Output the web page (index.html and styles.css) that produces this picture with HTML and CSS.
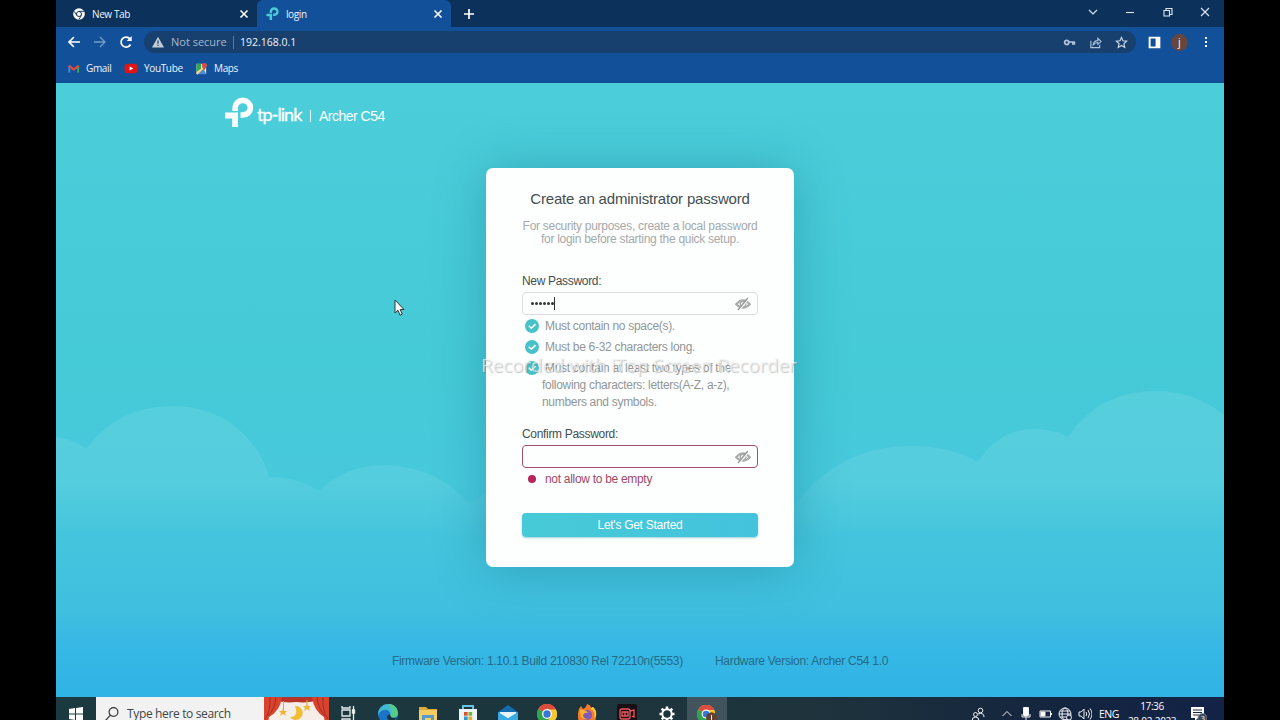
FILE: index.html
```html
<!DOCTYPE html>
<html lang="en">
<head>
<meta charset="utf-8">
<title>login</title>
<link rel="stylesheet" href="styles.css">
</head>
<body>
<svg class="defs" width="0" height="0" aria-hidden="true">
  <symbol id="tp" viewBox="0 0 30 30"><path d="M11.200 14V10.700a7.600 7.300 0 1 1 7.600 7.300H16.500" fill="none" stroke="currentColor" stroke-width="5.600"/><path d="M1 15.500h13V30H8.200v-8.500H1z" fill="currentColor"/></symbol>
  <symbol id="x" viewBox="0 0 10 10"><path d="M1.500 1.500l7 7M8.500 1.500l-7 7" fill="none" stroke="currentColor" stroke-width="1.600"/></symbol>
  <symbol id="chrome" viewBox="0 0 20 20"><circle cx="10" cy="10" r="10" fill="#f9c62f"/><path d="M10 10L1.300 5A10 10 0 0 1 18.700 5z" fill="#dd4b3e"/><path d="M10 10L1.300 5A10 10 0 0 0 9 20l5-8z" fill="#2da44f"/><path d="M10 5.500h8.900A10 10 0 0 1 9 20l5-8z" fill="#f9c62f"/><circle cx="10" cy="10" r="4.900" fill="#fff"/><circle cx="10" cy="10" r="3.700" fill="#3975d6"/></symbol>
  <symbol id="eye" viewBox="0 0 16 14"><path d="M1.200 7.200q6.800-8 13.600 0q-6.800 7-13.600 0z" fill="none" stroke="#aaa" stroke-width="2"/><circle cx="8" cy="7" r="2.800" fill="none" stroke="#aaa" stroke-width="1.400"/><path d="M4 13.500L13.800 1.500" stroke="#fdfefe" stroke-width="1.200"/><path d="M3 13L12.800 1" stroke="#999" stroke-width="1.400"/></symbol>
  <symbol id="check" viewBox="0 0 14 14"><circle cx="7" cy="7" r="7" fill="#48c2c9"/><path d="M3.800 6.800l2.500 2.500 4.200-4.200" fill="none" stroke="#fff" stroke-width="1.500"/></symbol>
</svg>
<div class="screen">
  <header class="tabs">
    <div class="tab">
      <svg class="favicon" viewBox="0 0 12 12"><circle cx="6" cy="6" r="5.800" fill="#fff"/><circle cx="6" cy="6" r="2.500" fill="#fff" stroke="#103158" stroke-width="1"/><path d="M6 3.300h5M3.600 7.300L1.300 3.400M8.400 7.300L6 11.400" stroke="#103158" stroke-width=".9"/></svg>
      <span class="tab-title">New Tab</span><svg class="close"><use href="#x"/></svg>
    </div>
    <div class="tab tab-active">
      <svg class="favicon"><use href="#tp"/></svg>
      <span class="tab-title">login</span><svg class="close"><use href="#x"/></svg>
    </div>
    <svg class="plus" viewBox="0 0 12 12"><path d="M6 1v10M1 6h10" stroke="#fff" stroke-width="1.700"/></svg>
    <div class="window-controls">
      <svg viewBox="0 0 12 12"><path d="M2 4l4 4 4-4" /></svg>
      <svg viewBox="0 0 12 12"><path d="M2 6.500h8"/></svg>
      <svg viewBox="0 0 12 12"><path d="M2 4.500h5.500V10H2zM4 4.500v-2h6v6H7.500"/></svg>
      <svg viewBox="0 0 12 12"><path d="M2 2l8 8M10 2l-8 8"/></svg>
    </div>
  </header>
  <div class="toolbar">
    <svg class="nav" viewBox="0 0 14 14"><path d="M13 7H2M7 2L2 7l5 5"/></svg>
    <svg class="nav nav-dim" viewBox="0 0 14 14"><path d="M1 7h11M7 2l5 5-5 5"/></svg>
    <svg class="nav" viewBox="0 0 14 14"><path d="M11.500 9.500A5 5 0 1 1 11 4"/><path d="M12.700 1v5H7.700z" fill="#fff" stroke="none"/></svg>
    <div class="address">
      <svg class="warn" viewBox="0 0 12 12"><path d="M6 .8L12 11.500H0z" fill="#c4ccd5"/><path d="M6 4.500v3.300M6 8.700v1.300" stroke="#17406f" stroke-width="1.200"/></svg>
      <span class="insecure">Not secure</span><span class="divider"></span><span class="url">192.168.0.1</span>
      <svg class="addr-icon" viewBox="0 0 14 14"><circle cx="4" cy="7" r="2.200" stroke-width="1.900"/><path d="M6 6.500h7M10.500 6.500v3M12.300 6.500v3" stroke-width="1.700"/></svg>
      <svg class="addr-icon" viewBox="0 0 14 14"><path d="M2 5v7.500h9.500V9.500M4.500 9.500q.5-4.500 5-4.500V2.500L13 6 9.500 9V7Q6.500 7 4.500 9.500z"/></svg>
      <svg class="addr-icon star" viewBox="0 0 14 14"><path d="M7 1.500l1.600 3.700 4 .4-3 2.700.9 4L7 10.200l-3.500 2.100.9-4-3-2.700 4-.4z"/></svg>
    </div>
    <svg class="panel" viewBox="0 0 12 12"><path d="M1.500 1.500h9v9h-9z" fill="none" stroke="#fff" stroke-width="1.800"/><path d="M7 1h4v10H7z" fill="#fff"/></svg>
    <span class="avatar">j</span>
    <svg class="kebab" viewBox="0 0 4 12"><path d="M1 1h2v2H1zM1 5h2v2H1zM1 9h2v2H1z" fill="#fff"/></svg>
  </div>
  <nav class="bookmarks">
    <svg class="bm" viewBox="0 0 14 14"><path d="M2.500 11.500V4" stroke="#4285d4" stroke-width="2.200"/><path d="M12 11.500V4" stroke="#36a65b" stroke-width="2.200"/><path d="M2 4l5.200 4.200L12.500 4" fill="none" stroke="#e5493c" stroke-width="2.400"/></svg><span class="gmail">Gmail</span>
    <svg class="bm yt" viewBox="0 0 14 14"><rect y="2" width="14" height="10" rx="3.500" fill="#e01414"/><path d="M5.500 4.800v4.400L9.500 7z" fill="#fff"/></svg><span class="youtube">YouTube</span>
    <svg class="bm" viewBox="0 0 14 14"><path d="M1.500 2h10.500v11H1.500z" fill="#eee"/><path d="M1.500 2h5v5l-5 4z" fill="#36a358"/><path d="M3 13l6-6 3 6z" fill="#4e8ad9"/><path d="M2 13L12 3" stroke="#f4d064" stroke-width="1.700"/><path d="M10 9Q6.500 4 7.500 2.500a2.800 2.800 0 0 1 5 0Q13.500 4 10 9z" fill="#dd4b3e"/></svg><span class="maps">Maps</span>
  </nav>
  <main class="page">
    <svg class="clouds" viewBox="0 0 1168 614">
      <defs><linearGradient id="cloud" gradientUnits="userSpaceOnUse" x1="0" y1="310" x2="0" y2="455"><stop offset="0" stop-color="#fff" stop-opacity=".09"/><stop offset=".55" stop-color="#fff" stop-opacity=".08"/><stop offset="1" stop-color="#fff" stop-opacity="0"/></linearGradient></defs>
      <path fill="url(#cloud)" d="M0 354Q17 356 30 366Q62 323 117 323C166 323 202 354 213 394Q242 394 263 408Q290 382 330 382Q382 384 413 421L430 410V614H0z"/>
      <path fill="url(#cloud)" d="M738 424Q782 363 854 363Q894 363 922 379Q943 346 978 346Q997 346 1012 354Q1043 308 1100 308Q1138 308 1168 332V614H738z"/>
    </svg>
    <div class="brand"><svg class="logo"><use href="#tp"/></svg><span class="brand-name">tp-link</span><span class="bar"></span><span class="model">Archer C54</span></div>
    <section class="card">
      <h1>Create an administrator password</h1>
      <p class="intro">For security purposes, create a local password<br>for login before starting the quick setup.</p>
      <label class="label">New Password:</label>
      <div class="field"><span class="dots"><i></i><i></i><i></i><i></i><i></i><i></i></span><span class="caret"></span><svg class="eye"><use href="#eye"/></svg></div>
      <ul class="rules">
        <li><svg class="check"><use href="#check"/></svg><span>Must contain no space(s).</span></li>
        <li><svg class="check"><use href="#check"/></svg><span>Must be 6-32 characters long.</span></li>
        <li><svg class="check"><use href="#check"/></svg><span>Must contain at least two types of the</span></li>
        <li class="rest"><span>following characters: letters(A-Z, a-z),<br>numbers and symbols.</span></li>
      </ul>
      <label class="label">Confirm Password:</label>
      <div class="field field-error"><svg class="eye"><use href="#eye"/></svg></div>
      <p class="error"><i></i><span>not allow to be empty</span></p>
      <button class="start">Let's Get Started</button>
      <div class="watermark">Recorded with iTop Screen Recorder</div>
    </section>
    <footer class="versions"><span>Firmware Version: 1.10.1 Build 210830 Rel 72210n(5553)</span><span>Hardware Version: Archer C54 1.0</span></footer>
    <svg class="cursor" viewBox="0 0 12 18"><path d="M1 1v13l3-2.800 2 5 2.200-1-2-4.700H10z" fill="#fff" stroke="#222" stroke-width=".9"/></svg>
  </main>
  <footer class="taskbar">
    <div class="windows"><svg width="14" height="14" viewBox="0 0 14 14"><path d="M0 2l6-.9v5.400H0zM7 1l7-1v6.500H7zM0 7.500h6v5.400L0 12zM7 7.500h7V14l-7-1z" fill="#fff"/></svg></div>
    <div class="search"><svg width="14" height="14" viewBox="0 0 14 14"><circle cx="8.500" cy="5" r="4.400"/><path d="M5.400 8.200L.5 13.500"/></svg><span>Type here to search</span></div>
    <svg class="stage" viewBox="0 0 65 33"><path fill="#f5eee8" d="M0 0h65v33H0z"/><path d="M0 0h65Q48 7 32 5Q17 7 0 0z" fill="#b93428"/><path d="M0 0h18Q16 14 5 20L3 33H0zM65 0H48q2 14 12 20l2 13h3z" fill="#d7432c"/><path d="M6 0Q7 14 1 22M12 0Q11 12 4 19M59 0q-1 14 5 22M53 0q1 12 8 19" stroke="#a62d22" fill="none" stroke-width="1"/><path d="M19.500 4v9M43 3v5" stroke="#d8ae39"/><path d="M31 9a7 7 0 1 1-5 11q9 0 5-11z" fill="#f1bd36"/><path d="M19 11l1 3h3l-2 2 1 3-3-2-3 2 1-3-2-2h3zM43 6l1 3h3l-2 2 1 3-3-2-3 2 1-3-2-2h3z" fill="#e9b638"/></svg>
    <div class="apps">
      <span><svg viewBox="0 0 20 20" fill="none" stroke="#e7ecee" stroke-width="1.300"><path d="M4 2v2h8V2M4 18v-3h8v3M4 6h8v6H4zM15.500 2v16"/><path d="M14.500 6h2v3h-2z" fill="#fff"/></svg></span>
      <span><svg viewBox="0 0 20 20"><circle cx="10" cy="10" r="10" fill="#1b74c7"/><path d="M0 9C2-3 19-3 20 9q0 5-6 4.500-3-.5-1.500-3Q11 5 6 6 1 7 0 12z" fill="#42b9d0"/><path d="M10 0q9 0 10 9 0 5-6 4.500-3-.5-1.500-3 3-5-2.500-10.500z" fill="#55cb8a"/><path d="M12 10.500q1 5 7 3l-3 3q-6 1-7-3 0-3 3-3z" fill="#1b3540"/></svg></span>
      <span><svg viewBox="0 0 20 20"><path d="M1 3h7l2 2h9v14H1z" fill="#dda83c"/><path d="M1 6h18v13H1z" fill="#f6cd62"/><path d="M4 11h12v8h-3v-5H7v5H4z" fill="#559cca"/></svg></span>
      <span><svg viewBox="0 0 20 20"><path d="M5 6V2h10v4" fill="none" stroke="#69c2df" stroke-width="2"/><path d="M1 5h18v15H1z" fill="#eef3f5"/><path d="M6 8h3.700v3.700H6z" fill="#db5230"/><path d="M10.500 8h3.700v3.700h-3.700z" fill="#79b438"/><path d="M6 12.500h3.700v3.700H6z" fill="#2e98d1"/><path d="M10.500 12.500h3.700v3.700h-3.700z" fill="#e8ae2b"/></svg></span>
      <span><svg viewBox="0 0 20 20"><path d="M0 8l10-7 10 7v12H0z" fill="#146cb0"/><path d="M2 8h16v8H2z" fill="#e5f4f9"/><path d="M0 8l10 6 10-6v12H0z" fill="#3aabe2"/><path d="M1 8h18l-9 6z" fill="#e5f4f9"/></svg></span>
      <span><svg><use href="#chrome"/></svg></span>
      <span><svg viewBox="0 0 20 20"><path d="M1 9Q1 5 4 2l2 3q3-1 4-5 4 1 4 4l2-1q4 4 3 10a9 9 0 0 1-18 0z" fill="#f37b2c"/><path d="M10 0q4 2 4 5 5 3 3 9l2-2Q20 6 16 3l-2 1Q13 1 10 0z" fill="#ffc83d"/><circle cx="10" cy="11" r="5" fill="#805ab4"/><path d="M3 6q5-1 8 3-4-1-5 2 0 4 5 4-8 2-8-9z" fill="#ffb42c"/></svg></span>
      <span><svg viewBox="0 0 20 20"><rect width="20" height="20" rx="2" fill="#170f13"/><g fill="none" stroke="#eb5960" stroke-width="1.300"><rect x="3" y="5" width="10" height="10" rx="2"/><path d="M13 7l4-1v7l-2-1M5 8h6v4H5zM8 8v4"/></g></svg></span>
      <span><svg viewBox="0 0 20 20"><circle cx="10" cy="10" r="4.700" fill="none" stroke="#fff" stroke-width="2"/><path d="M10 2.500V5M10 15v2.500M2.500 10H5M15 10h2.500M4.700 4.700l1.800 1.800M13.500 13.500l1.800 1.800M4.700 15.300l1.800-1.800M13.500 6.500l1.800-1.800" stroke="#fff" stroke-width="2.500"/></svg></span>
      <span class="app-active"><svg viewBox="0 0 22 20"><use href="#chrome" width="20" height="20"/><circle cx="16" cy="14" r="6" fill="#63402f"/><path d="M16 11v6" stroke="#fff"/></svg></span>
    </div>
    <div class="tray">
      <svg class="people" viewBox="0 0 14 14"><circle cx="9.500" cy="3.500" r="2.300"/><circle cx="4.500" cy="7.500" r="2"/><path d="M1 14q0-4 3.500-4T8 14M7 7q6-2 6 3"/></svg>
      <svg class="t-chev" viewBox="0 0 14 14"><path d="M2.500 9L7 4.500 11.500 9"/></svg>
      <svg class="t-mic" viewBox="0 0 14 14"><rect x="4.500" y="0" width="5" height="9" rx="1" fill="#fff"/><path d="M3 7v3h8V7M7 10v3"/></svg>
      <svg class="t-bat" viewBox="0 0 14 14"><path d="M1 4h10.500v6H1zM12.500 6v2"/><path d="M2 5h4v4H2z" fill="#fff"/></svg>
      <svg class="t-globe" viewBox="0 0 14 14"><circle cx="7" cy="7" r="6"/><ellipse cx="7" cy="7" rx="3" ry="6"/><path d="M1 7h12M2 4h10M2 10h10"/><circle cx="11" cy="10.500" r="2.500" fill="#17283f"/></svg>
      <svg class="t-vol" viewBox="0 0 14 14"><path d="M1 5h2l3-3v10L3 9H1zM8 5q1.500 2 0 4M10 3q3 4 0 8M12 1.500q4 5.500 0 11"/></svg>
      <span class="lang">ENG</span>
      <span class="clock"><b>17:36</b><b class="date">28-02-2023</b></span>
      <svg class="t-note" viewBox="0 0 18 18"><path d="M2 2h13v11H9l-3 3v-3H2z" fill="#fff"/><path d="M4 5h9M4 7.500h9M4 10h6" stroke="#17283f"/><circle cx="13.500" cy="13" r="4.500" fill="#39475a" stroke="#8893a0" stroke-width=".7"/><text x="11.400" y="16" class="note-count">3</text></svg>
    </div>
  </footer>
</div>
</body>
</html>
```
FILE: styles.css
```css
* { box-sizing: border-box; }
body { margin: 0; background: #000; font-family: "Liberation Sans", Arial, sans-serif; height: 720px; overflow: hidden; }
svg { display: block; flex: none; }
.defs { position: absolute; }
.screen { width: 1168px; height: 720px; margin: 0 auto; display: flex; flex-direction: column; overflow: hidden; }
.tabs, .toolbar, .bookmarks { font-family: "Open Sans", "Noto Sans", sans-serif; font-size: 10px; color: #eef4fb; flex: none; display: flex; align-items: center; white-space: nowrap; }
.tabs { height: 27px; background: #0c325c; }
.tab { width: 201px; height: 27px; padding: 0 8px 0 17px; display: flex; align-items: center; letter-spacing: -.4px; font-weight: 500; }
.tab-active { width: 194px; padding-left: 9px; background: #12509a; border-radius: 6px 6px 0 0; }
.favicon { width: 12px; height: 12px; color: #4acbd6; }
.tab-active .favicon { width: 13px; height: 13px; }
.tab-title { flex: 1; margin-left: 7px; }
.close { width: 10px; height: 10px; color: #fff; }
.plus { width: 12px; height: 12px; margin-left: 12px; }
.window-controls { margin-left: auto; margin-right: 13px; display: flex; gap: 25.300px; margin-top: -3px; }
.window-controls svg { width: 12px; height: 12px; fill: none; stroke: #dce7f2; stroke-width: 1.100; }
.toolbar { height: 30px; background: #12509a; padding-left: 11px; }
.nav { width: 14px; height: 14px; margin-right: 12px; fill: none; stroke: #fff; stroke-width: 1.700; }
.nav-dim { stroke: #759cc8; stroke-width: 1.300; }
.address { width: 992px; height: 22px; margin-left: -1px; border-radius: 11px; background: #17406f; display: flex; align-items: center; padding: 0 8px; }
.warn { width: 12px; height: 12px; }
.insecure { color: #a8b8ca; font-size: 11px; line-height: 14px; margin: -1px 0 0 7px; width: 62px; }
.divider { width: 1px; height: 13px; background: #5a7898; }
.url { margin-left: 6px; flex: 1; font-size: 10.500px; font-weight: 500; }
.addr-icon { width: 13px; height: 13px; margin-left: 13px; fill: none; stroke: #b1c3da; stroke-width: 1.200; }
.star { stroke: #d0dceb; }
.panel { width: 13px; height: 13px; margin-left: 12px; }
.avatar { width: 17px; height: 17px; border-radius: 50%; background: #66463e; text-align: center; line-height: 16px; font-size: 11px; margin-left: 10px; }
.kebab { width: 4px; height: 12px; margin-left: 16px; }
.bookmarks { height: 26px; background: #12509a; padding: 0 0 4px 11px; letter-spacing: -.35px; font-weight: 500; }
.bm { width: 13px; height: 13px; margin-right: 6px; }
.gmail { width: 38px; }
.youtube { width: 51px; }
.yt { width: 14px; }
.page { position: relative; flex: none; height: 614px; display: flex; flex-direction: column; background: linear-gradient(#4ccdda 0, #45cad7 45%, #47c9dc 66%, #40bfdf 86%, #37b8e5 91%, #30b4e5); }
.clouds { position: absolute; inset: 0; width: 1168px; height: 614px; }
.brand { position: relative; height: 85px; padding: 14px 0 0 168px; display: flex; align-items: flex-start; color: #fff; white-space: nowrap; }
.logo { width: 30px; height: 30px; }
.brand-name { font: 18px/20px Lato, sans-serif; width: 45px; margin: 7px 0 0 3px; letter-spacing: -.95px; -webkit-text-stroke: .3px #fff; }
.bar { width: 1px; height: 12px; background: #dff8fa; margin: 13px 8px 0 8px; }
.model { font-size: 14px; line-height: 16px; margin-top: 11px; letter-spacing: -.5px; }
.card { position: relative; align-self: center; width: 308px; height: 399px; padding: 22px 36px 0; background: #fdfefe; border-radius: 7px; box-shadow: 0 2px 50px rgba(18, 106, 132, .38); color: #444f50; }
h1 { margin: 0; text-align: center; font-size: 15px; line-height: 18px; font-weight: 400; letter-spacing: -.18px; white-space: nowrap; }
.intro { margin: 12px -4px 0; height: 45px; text-align: center; font-size: 12px; line-height: 13px; letter-spacing: -.29px; color: #a5aaaa; white-space: nowrap; }
.label { display: block; font-size: 12px; line-height: 14px; margin-top: 9px; letter-spacing: -.32px; }
.field { height: 23px; margin-top: 4px; border: 1px solid #ddd; border-radius: 4px; display: flex; align-items: center; padding: 0 6px 0 8px; }
.field-error { border-color: #a94d6d; }
.dots { display: flex; gap: 1px; }
.dots i { width: 3px; height: 3px; border-radius: 50%; background: #333; }
.caret { width: 1px; height: 13px; background: #333; }
.eye { width: 16px; height: 14px; margin-left: auto; }
.rules { list-style: none; margin: 0; padding: 0 0 0 3px; font-size: 12px; letter-spacing: -.3px; color: #919798; height: 103px; white-space: nowrap; }
.rules li { display: flex; align-items: center; height: 21px; }
.rules .rest { display: block; height: 34px; line-height: 17px; padding-left: 17px; margin-top: -1px; }
.check { width: 14px; height: 14px; margin-right: 6px; }
.error { margin: 4px 0 0 6px; height: 14px; display: flex; align-items: center; font-size: 12px; letter-spacing: -.3px; color: #a14969; }
.error i { width: 8px; height: 8px; background: #b6255b; border-radius: 50%; margin-right: 9px; }
.start { display: block; width: 236px; height: 24px; margin-top: 27px; padding: 0; border: 0; border-radius: 4px; background: linear-gradient(90deg, #47cad7, #43c3dd); color: #fff; font: 12px/22px "Liberation Sans", Arial, sans-serif; letter-spacing: -.28px; box-shadow: 0 1px 2px #9ad3d9; }
.watermark { position: absolute; left: -5px; top: 183px; width: 320px; font: 19px/28px "Open Sans", "Noto Sans", sans-serif; letter-spacing: -.18px; color: rgba(242, 242, 242, .7); text-shadow: 1px 1px 1px rgba(110, 110, 110, .38); white-space: nowrap; }
.versions { position: relative; display: flex; justify-content: center; gap: 32px; margin-top: 86px; font-size: 12px; letter-spacing: -.28px; line-height: 16px; color: #266b87; white-space: nowrap; }
.cursor { position: absolute; left: 338px; top: 216px; width: 12px; height: 18px; }
.taskbar { flex: none; height: 33px; display: flex; background: linear-gradient(90deg, #1b3a40, #1e333c 65%, #14253f 85%, #132347); color: #fff; font-family: "Open Sans", "Noto Sans", sans-serif; }
.windows { width: 40px; display: flex; align-items: center; justify-content: center; }
.search { width: 168px; background: #f1f2f1; color: #424647; display: flex; align-items: center; gap: 8px; padding-left: 9px; font-size: 12px; letter-spacing: -.35px; white-space: nowrap; }
.search svg { fill: none; stroke: #333; stroke-width: 1.200; }
.stage { width: 65px; height: 33px; }
.apps { display: grid; grid-template-columns: repeat(10, 39.900px); margin-left: -1px; }
.apps span { display: grid; place-items: center; }
.apps svg { width: 20px; height: 20px; }
.app-active { background: #41545e; }
.tray { margin-left: auto; display: flex; padding-right: 17px; align-items: center; }
.tray > svg { width: 14px; height: 14px; fill: none; stroke: #eef1f4; stroke-width: 1; }
.tray > .t-chev { margin-left: 15px; }
.tray > .t-mic { margin-left: 5px; }
.tray > .t-bat { margin-left: 6px; }
.tray > .t-globe { margin-left: 5px; }
.tray > .t-vol { margin-left: 6px; }
.lang { font-size: 10.500px; width: 20px; margin-left: 7px; letter-spacing: -.5px; }
.clock { display: flex; flex-direction: column; align-items: center; width: 50px; margin-left: 8px; font-size: 10px; line-height: 15px; white-space: nowrap; }
.clock b { font-weight: 400; letter-spacing: -.4px; }
.tray > .t-note { width: 18px; height: 18px; margin-left: 12px; stroke: none; }
.note-count { font: 8px "Open Sans", sans-serif; fill: #fff; }
```
